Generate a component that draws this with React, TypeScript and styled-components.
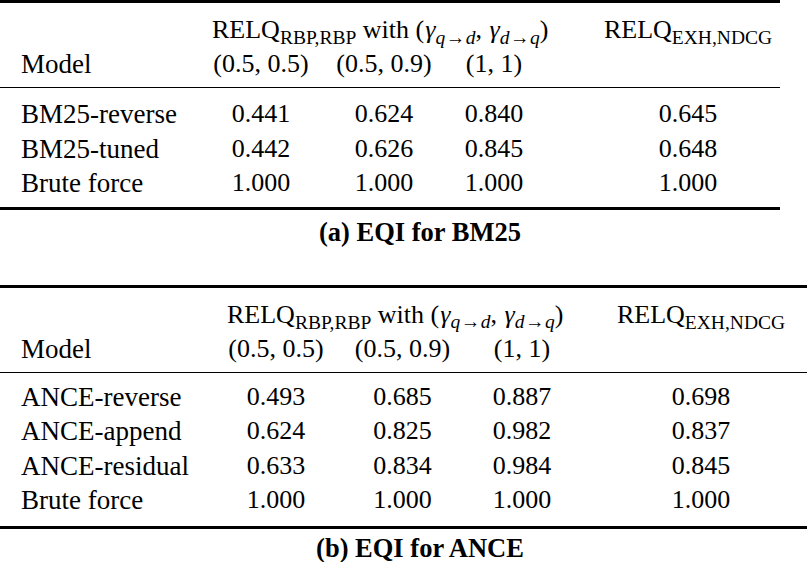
import React from "react";
import styled, { createGlobalStyle } from "styled-components";

const GlobalStyle = createGlobalStyle`
  html, body { margin: 0; padding: 0; background: #ffffff; }
  body {
    font-family: "Liberation Serif", "Times New Roman", serif;
    color: #000000;
  }
`;

const Page = styled.div`
  width: 807px;
  display: flex;
  flex-direction: column;
  align-items: flex-start;
`;

const SubFigure = styled.figure<{ $after: number }>`
  margin: 0 0 ${(p) => p.$after}px 0;
  display: flex;
  flex-direction: column;
`;

const Table = styled.table<{ $w: number; $bodyTop: number; $bodyBottom: number }>`
  width: ${(p) => p.$w}px;
  border-collapse: collapse;
  table-layout: fixed;
  border-top: 3px solid #000;
  border-bottom: 3px solid #000;
  font-size: 26px;

  thead {
    border-bottom: 1.5px solid #000;
  }
  tbody tr:first-child td {
    padding-top: ${(p) => p.$bodyTop}px;
  }
  tbody tr:last-child td {
    padding-bottom: ${(p) => p.$bodyBottom}px;
  }
`;

const Col = styled.col<{ $w: number }>`
  width: ${(p) => p.$w}px;
`;

const Th = styled.th<{
  $align: "left" | "center";
  $valign: "top" | "bottom";
  $pl?: number;
  $pt?: number;
  $pb?: number;
  $label?: boolean;
}>`
  font-weight: normal;
  font-size: ${(p) => (p.$label ? "27px" : "26px")};
  line-height: 34px;
  white-space: nowrap;
  text-align: ${(p) => p.$align};
  vertical-align: ${(p) => p.$valign};
  padding: ${(p) => p.$pt ?? 0}px 0 ${(p) => p.$pb ?? 0}px ${(p) => p.$pl ?? 0}px;
`;

const ModelCell = styled.td`
  font-size: 27px;
  line-height: 34.5px;
  padding: 0 0 0 21px;
  text-align: left;
  white-space: nowrap;
`;

const NumCell = styled.td<{ $pl?: number }>`
  line-height: 34.5px;
  padding: 0 0 0 ${(p) => p.$pl ?? 0}px;
  text-align: center;
  white-space: nowrap;
`;

const Sub = styled.span`
  font-size: 0.75em;
  vertical-align: -0.3em;
  line-height: 0;
`;

const MathI = styled.i`
  font-style: italic;
`;

const Gam = styled.i`
  font-style: italic;
  margin-left: 1px;
`;

const Arrow = styled.span`
  font-style: normal;
  margin: 0 0.5px;
`;

const Caption = styled.figcaption<{ $w: number; $top: number }>`
  box-sizing: border-box;
  width: ${(p) => p.$w}px;
  margin-top: ${(p) => p.$top}px;
  padding-left: 33px;
  font-size: 26.5px;
  line-height: 34px;
  font-weight: 700;
  text-align: center;
  white-space: nowrap;
`;

type TableSpec = {
  width: number;
  cols: number[];
  multiPad: number;
  exhPad: number;
  bodyTop: number;
  bodyBottom: number;
  captionTop: number;
  rows: [string, string, string, string, string][];
  caption: string;
  after: number;
};

const tables: TableSpec[] = [
  {
    width: 780,
    cols: [200, 122, 124, 96, 238],
    multiPad: 12,
    exhPad: 54,
    bodyTop: 9,
    bodyBottom: 6,
    captionTop: 5,
    rows: [
      ["BM25-reverse", "0.441", "0.624", "0.840", "0.645"],
      ["BM25-tuned", "0.442", "0.626", "0.845", "0.648"],
      ["Brute force", "1.000", "1.000", "1.000", "1.000"],
    ],
    caption: "(a) EQI for BM25",
    after: 36,
  },
  {
    width: 807,
    cols: [215, 122, 131, 108, 231],
    multiPad: 12,
    exhPad: 19,
    bodyTop: 7,
    bodyBottom: 8,
    captionTop: 2,
    rows: [
      ["ANCE-reverse", "0.493", "0.685", "0.887", "0.698"],
      ["ANCE-append", "0.624", "0.825", "0.982", "0.837"],
      ["ANCE-residual", "0.633", "0.834", "0.984", "0.845"],
      ["Brute force", "1.000", "1.000", "1.000", "1.000"],
    ],
    caption: "(b) EQI for ANCE",
    after: 0,
  },
];

function Gamma({ from, to }: { from: string; to: string }) {
  return (
    <>
      <Gam>γ</Gam>
      <Sub>
        <MathI>{from}</MathI>
        <Arrow>→</Arrow>
        <MathI>{to}</MathI>
      </Sub>
    </>
  );
}

function ResultTable({ spec }: { spec: TableSpec }) {
  return (
    <SubFigure $after={spec.after}>
      <Table $w={spec.width} $bodyTop={spec.bodyTop} $bodyBottom={spec.bodyBottom}>
        <colgroup>
          {spec.cols.map((w, i) => (
            <Col key={i} $w={w} />
          ))}
        </colgroup>
        <thead>
          <tr>
            <Th rowSpan={2} $label $align="left" $valign="bottom" $pl={21} $pt={10} $pb={6}>
              Model
            </Th>
            <Th colSpan={3} $align="left" $valign="top" $pl={spec.multiPad} $pt={10}>
              RELQ<Sub>RBP,RBP</Sub> with (<Gamma from="q" to="d" />,{" "}
              <Gamma from="d" to="q" />)
            </Th>
            <Th rowSpan={2} $align="center" $valign="top" $pl={spec.exhPad} $pt={10} $pb={6}>
              RELQ<Sub>EXH,NDCG</Sub>
            </Th>
          </tr>
          <tr>
            <Th $align="center" $valign="bottom" $pb={6}>
              (0.5, 0.5)
            </Th>
            <Th $align="center" $valign="bottom" $pb={6}>
              (0.5, 0.9)
            </Th>
            <Th $align="center" $valign="bottom" $pb={6}>
              (1, 1)
            </Th>
          </tr>
        </thead>
        <tbody>
          {spec.rows.map((r) => (
            <tr key={r[0]}>
              <ModelCell>{r[0]}</ModelCell>
              <NumCell>{r[1]}</NumCell>
              <NumCell>{r[2]}</NumCell>
              <NumCell>{r[3]}</NumCell>
              <NumCell $pl={spec.exhPad}>{r[4]}</NumCell>
            </tr>
          ))}
        </tbody>
      </Table>
      <Caption $w={807} $top={spec.captionTop}>
        {spec.caption}
      </Caption>
    </SubFigure>
  );
}

export default function App() {
  return (
    <>
      <GlobalStyle />
      <Page>
        {tables.map((t) => (
          <ResultTable key={t.caption} spec={t} />
        ))}
      </Page>
    </>
  );
}
